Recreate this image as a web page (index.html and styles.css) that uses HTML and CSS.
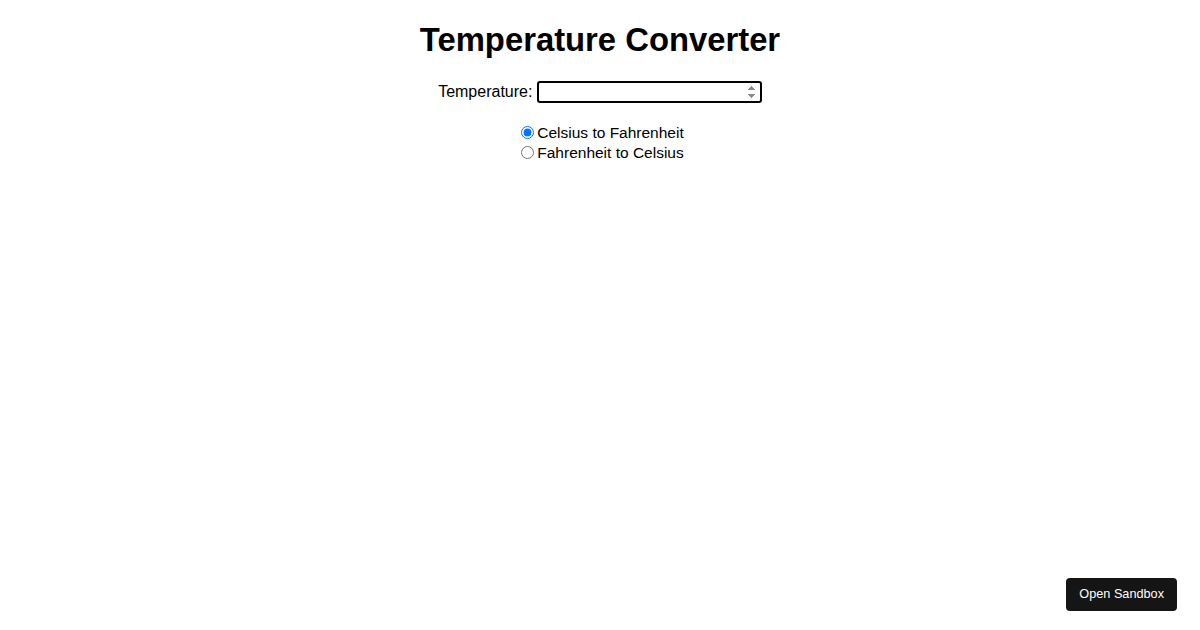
FILE: index.html
```html
<!DOCTYPE html>
<html>
<head>
<meta charset="utf-8">
<title>Temperature Converter</title>
<link rel="stylesheet" href="styles.css">
</head>
<body>
<div class="app">
  <h1 class="title">Temperature Converter</h1>
  <div class="field">
    <label class="field-label" for="temp">Temperature:</label>
    <input class="temp-input" id="temp" type="number" autofocus>
  </div>
  <div class="options">
    <label class="option"><input class="radio" type="radio" name="mode" checked>Celsius to Fahrenheit</label>
    <label class="option"><input class="radio" type="radio" name="mode">Fahrenheit to Celsius</label>
  </div>
</div>
<a class="sandbox-btn" href="#">Open Sandbox</a>
</body>
</html>
```

FILE: styles.css
```css
html, body {
  background: #fff;
}
body {
  margin: 0;
  font-family: "Liberation Sans", Arial, sans-serif;
  color: #000;
}
.app {
  text-align: center;
  padding: 21px 8px 0;
}
.title {
  font-size: 32.8px;
  font-weight: bold;
  line-height: 38px;
  margin: 0 0 22px;
}
.field {
  font-size: 16px;
  margin-bottom: 20px;
}
.temp-input {
  width: 219px;
  height: 18px;
  font-size: 13.33px;
  font-family: "Liberation Sans", Arial, sans-serif;
  border: 2px solid #000;
  border-radius: 3px;
  padding: 0 1px;
  outline: none;
  box-sizing: content-box;
  vertical-align: baseline;
}
.options {
  font-size: 15.5px;
}
.option {
  display: block;
  line-height: 20px;
}
.radio {
  margin: 0 3px 0 5px;
  width: 13px;
  height: 13px;
  vertical-align: -1px;
  accent-color: #0075ff;
}
.sandbox-btn {
  position: fixed;
  right: 23px;
  bottom: 19px;
  background: #151515;
  color: #fff;
  text-decoration: none;
  font-family: "Liberation Sans", Arial, sans-serif;
  font-size: 12.7px;
  padding: 0 13px;
  height: 33px;
  line-height: 33px;
  border-radius: 4px;
}
```
